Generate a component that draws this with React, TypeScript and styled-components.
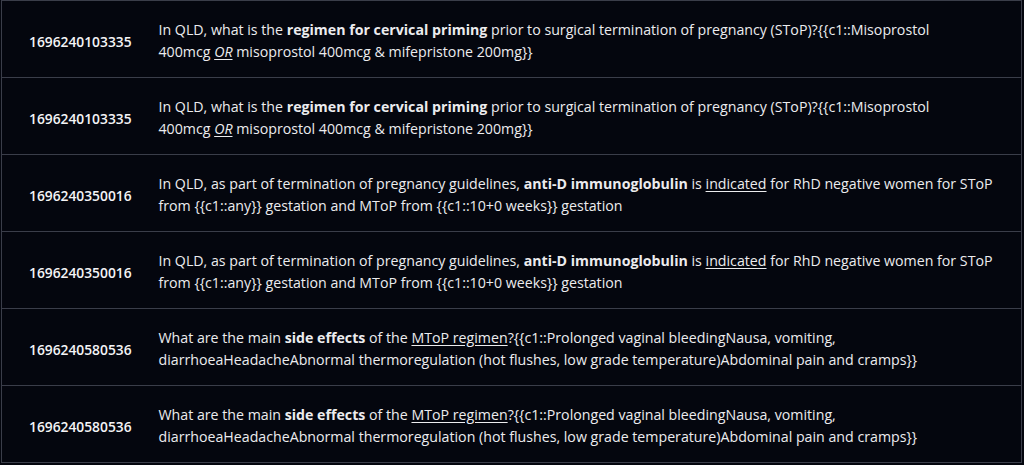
import React from "react";
import styled, { createGlobalStyle } from "styled-components";

const Global = createGlobalStyle`
  html, body { margin: 0; padding: 0; background: #04060e; }
  body { font-family: "Open Sans", "Noto Sans", sans-serif; color: #e6e6e8; }
`;

const Page = styled.div`
  width: 1024px;
  height: 465px;
  background: #04060e;
  padding-left: 1px;
  box-sizing: border-box;
`;

const Table = styled.table`
  width: 1021px;
  border-collapse: collapse;
  table-layout: fixed;
  border: 1px solid #3a3d49;
`;

const Row = styled.tr`
  height: 77px;
  border-top: 1px solid #3a3d49;
`;

const IdCell = styled.td`
  padding: 4px 0 0 27px;
  font-size: 13.8px;
  font-weight: 600;
  color: #f4f4f6;
  vertical-align: middle;
  white-space: nowrap;
`;

const TextCell = styled.td`
  padding: 3px 16px 0 16px;
  font-size: 14.2px;
  line-height: 22px;
  color: #ececee;
  vertical-align: middle;
  white-space: nowrap;
`;

const U = styled.u`
  text-underline-offset: 2px;
`;

const rows: { id: string; body: React.ReactNode }[] = [];

const cervical = (
  <>
    In QLD, what is the <b>regimen for cervical priming</b> prior to surgical termination of pregnancy (SToP)?{"{{"}c1::Misoprostol
    <br />
    400mcg <U><i>OR</i></U> misoprostol 400mcg &amp; mifepristone 200mg{"}}"}
  </>
);
const antiD = (
  <>
    In QLD, as part of termination of pregnancy guidelines, <b>anti-D immunoglobulin</b> is <U>indicated</U> for RhD negative women for SToP
    <br />
    from {"{{"}c1::any{"}}"} gestation and MToP from {"{{"}c1::10+0 weeks{"}}"} gestation
  </>
);
const side = (
  <>
    What are the main <b>side effects</b> of the <U>MToP regimen</U>?{"{{"}c1::Prolonged vaginal bleedingNausa, vomiting,
    <br />
    diarrhoeaHeadacheAbnormal thermoregulation (hot flushes, low grade temperature)Abdominal pain and cramps{"}}"}
  </>
);

rows.push({ id: "1696240103335", body: cervical });
rows.push({ id: "1696240103335", body: cervical });
rows.push({ id: "1696240350016", body: antiD });
rows.push({ id: "1696240350016", body: antiD });
rows.push({ id: "1696240580536", body: side });
rows.push({ id: "1696240580536", body: side });

export default function App() {
  return (
    <Page>
      <Global />
      <Table>
        <colgroup>
          <col style={{ width: 141 }} />
          <col />
        </colgroup>
        <tbody>
          {rows.map((r, i) => (
            <Row key={i}>
              <IdCell>{r.id}</IdCell>
              <TextCell>{r.body}</TextCell>
            </Row>
          ))}
        </tbody>
      </Table>
    </Page>
  );
}
